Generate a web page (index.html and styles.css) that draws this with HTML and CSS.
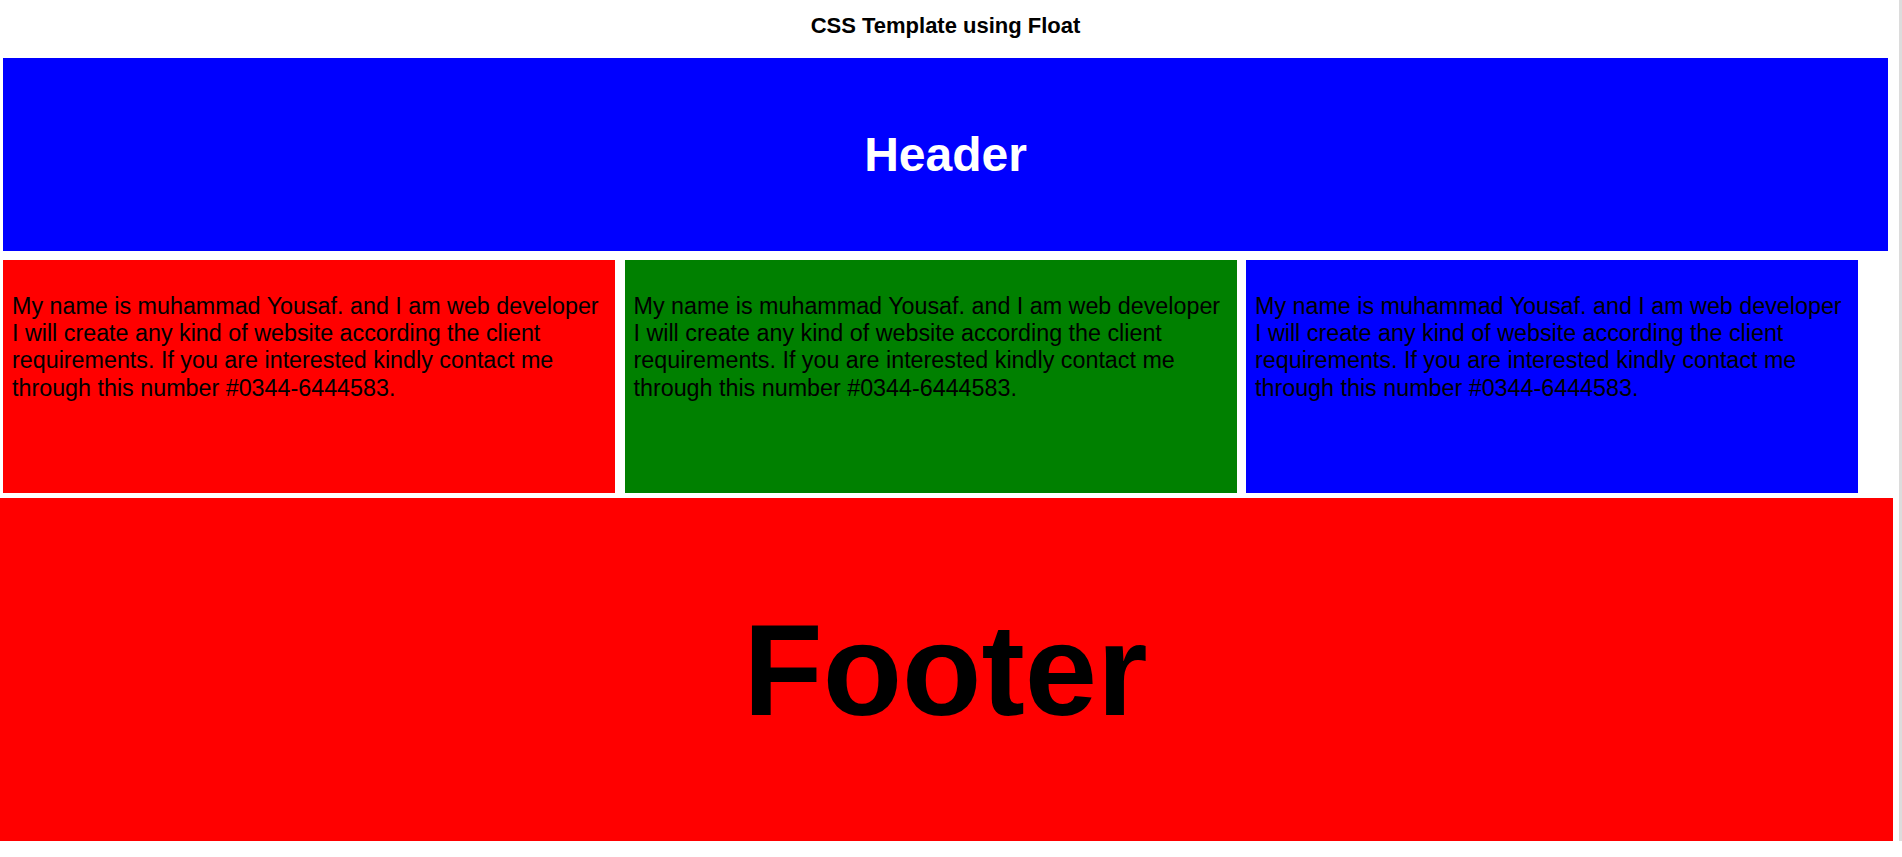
FILE: index.html
```html
<!DOCTYPE html>
<html lang="en">
<head>
<meta charset="utf-8">
<title>CSS Template using Float</title>
<link rel="stylesheet" href="styles.css">
</head>
<body>
<div class="page">
  <h2 class="title">CSS Template using Float</h2>
  <header class="header"><h1>Header</h1></header>
  <section class="columns">
    <div class="col col-red"><p>My name is muhammad Yousaf. and I am web developer I will create any kind of website according the client requirements. If you are interested kindly contact me through this number #0344-6444583.</p></div>
    <div class="col col-green"><p>My name is muhammad Yousaf. and I am web developer I will create any kind of website according the client requirements. If you are interested kindly contact me through this number #0344-6444583.</p></div>
    <div class="col col-blue"><p>My name is muhammad Yousaf. and I am web developer I will create any kind of website according the client requirements. If you are interested kindly contact me through this number #0344-6444583.</p></div>
  </section>
  <footer class="footer"><h1>Footer</h1></footer>
</div>
</body>
</html>
```
FILE: styles.css
```css
html {
  border-right: 3px solid #dcdcdc;
  background: #fff;
}
body {
  margin: 0;
  font-family: "Liberation Sans", Arial, sans-serif;
  color: #000;
  background: #fff;
}
.page {
  width: 1891px;
  padding-top: 13px;
}
.title {
  margin: 0;
  font-size: 22px;
  font-weight: bold;
  text-align: center;
  line-height: 25px;
}
.header {
  margin: 20px 0 0 3px;
  width: 1885px;
  height: 193px;
  background: #0000ff;
  display: flex;
  align-items: center;
  justify-content: center;
}
.header h1 {
  margin: 0;
  color: #fff;
  font-size: 48px;
  font-weight: bold;
  line-height: 1;
}
.columns {
  display: grid;
  grid-template-columns: 612px 612px 612px;
  column-gap: 9.5px;
  margin: 9px 0 0 3px;
}
.col {
  height: 233px;
  box-sizing: border-box;
  padding: 10px 11px 10px 9px;
  overflow: hidden;
}
.col p {
  margin: 22.5px 0;
  font-size: 23.3px;
  line-height: 27.4px;
}
.col-red { background: #ff0000; }
.col-green { background: #008000; }
.col-blue { background: #0000ff; }
.footer {
  margin-top: 5px;
  width: 1893px;
  height: 343px;
  background: #ff0000;
  display: flex;
  align-items: center;
  justify-content: center;
}
.footer h1 {
  margin: 0;
  font-size: 130px;
  font-weight: bold;
  line-height: 1;
  padding-right: 2px;
}
```
